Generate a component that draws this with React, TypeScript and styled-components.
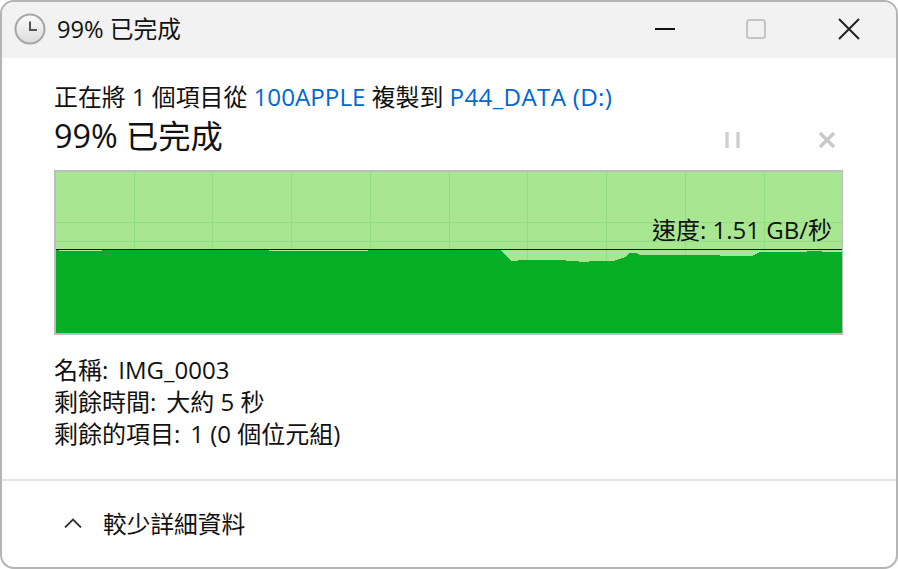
import styled, { createGlobalStyle } from "styled-components";

const GlobalStyle = createGlobalStyle`
  html, body {
    margin: 0;
    padding: 0;
    background: #fff;
  }
  body {
    font-family: "Open Sans", "Noto Sans CJK TC", sans-serif;
  }
`;

const Window = styled.div`
  box-sizing: border-box;
  width: 898px;
  height: 569px;
  border: 2px solid #b4b4b4;
  border-radius: 14px;
  background: #fff;
  overflow: hidden;
  display: flex;
  flex-direction: column;
`;
const TitleBar = styled.div`
  box-sizing: border-box;
  height: 56px;
  flex: none;
  background: #f2f2f2;
  display: flex;
  align-items: center;
  padding: 0 0 2px 12px;
  color: #111;
`;
const TitleText = styled.div`
  margin-left: 11px;
  padding-bottom: 2px;
  font-size: 23.7px;
  flex: 1;
`;
const WinButton = styled.button<{ $w: number }>`
  width: ${(p) => p.$w}px;
  height: 54px;
  border: 0;
  background: transparent;
  padding: 0;
  display: flex;
  align-items: center;
  justify-content: center;
`;
const Content = styled.div`
  flex: 1;
  padding: 21px 54px 0 52px;
  display: flex;
  flex-direction: column;
`;
const CopyLine = styled.div`
  font-size: 23.9px;
  line-height: 36px;
  color: #111;
  white-space: nowrap;
`;
const Link = styled.span<{ $spacing?: number }>`
  color: #0068d0;
  font-size: 24.2px;
  letter-spacing: ${(p) => p.$spacing ?? 0}px;
`;
const HeadRow = styled.div`
  display: flex;
  align-items: center;
  height: 42px;
`;
const Heading = styled.div`
  flex: 1;
  padding-bottom: 4px;
  font-size: 32.3px;
  color: #111;
`;
const Controls = styled.div`
  display: flex;
  align-items: center;
  gap: 79px;
  padding: 8px 7px 0 0;
`;
const Chart = styled.div`
  position: relative;
  margin-top: 13px;
  box-sizing: border-box;
  width: 789px;
  height: 165px;
  border: 2px solid #bcbcbc;
  border-right-width: 1px;
  background: #a9e691;
  svg {
    display: block;
  }
`;
const Speed = styled.div`
  position: absolute;
  right: 10px;
  top: 42px;
  font-size: 24px;
  line-height: 32px;
  color: #111;
  white-space: nowrap;
`;
const Details = styled.div`
  margin-top: 19px;
  font-size: 24px;
  line-height: 32px;
  color: #111;
`;
const DetailRow = styled.div`
  display: flex;
  gap: 10px;
`;
const Footer = styled.div`
  margin-top: auto;
  box-sizing: border-box;
  height: 88px;
  flex: none;
  border-top: 2px solid #e3e3e3;
  display: flex;
  align-items: center;
  padding: 0 0 3px 62px;
  gap: 21px;
  font-size: 23.7px;
  color: #111;
`;

const gridX = [78, 156, 235, 314, 393, 471, 550, 629, 708];
const gridY = [50, 69];
const fillTop =
  "0,78 3,78 3,79 46,79 46,78 213,78 213,79 312,79 312,78 444,78 456,89 468,88 504,88 529,90 537,89 557,89 569,85 574,81 580,81 584,83 624,83 664,83 664,84 696,84 704,80 751,80 751,79 766,79 766,80 786,80";

function App() {
  return (
    <Window>
      <GlobalStyle />
      <TitleBar>
        <svg width="32" height="32" viewBox="0 0 32 32">
          <defs>
            <linearGradient id="face" x1="0" y1="0" x2="0" y2="1">
              <stop offset="0" stopColor="#fbfbfb" />
              <stop offset="1" stopColor="#dcdcdc" />
            </linearGradient>
          </defs>
          <circle cx="16" cy="16" r="14.5" fill="url(#face)" stroke="#a5a5a5" strokeWidth="2" />
          <path d="M16 8.5V17H23" fill="none" stroke="#555" strokeWidth="2" />
        </svg>
        <TitleText>99% 已完成</TitleText>
        <WinButton $w={91}>
          <svg width="20" height="20" viewBox="0 0 20 20">
            <path d="M0 10H20" stroke="#111" strokeWidth="2" />
          </svg>
        </WinButton>
        <WinButton $w={91}>
          <svg width="20" height="20" viewBox="0 0 20 20">
            <rect x="1" y="1" width="18" height="18" rx="2.5" fill="none" stroke="#c4c4c4" strokeWidth="2" />
          </svg>
        </WinButton>
        <WinButton $w={95}>
          <svg width="22" height="22" viewBox="0 0 22 22">
            <path d="M1 1L21 21M21 1L1 21" stroke="#222" strokeWidth="2" />
          </svg>
        </WinButton>
      </TitleBar>
      <Content>
        <CopyLine>
          正在將 1 個項目從 <Link>100APPLE</Link> 複製到 <Link $spacing={0.3}>P44_DATA (D:)</Link>
        </CopyLine>
        <HeadRow>
          <Heading>99% 已完成</Heading>
          <Controls>
            <svg width="15" height="16" viewBox="0 0 15 16">
              <path d="M2 0V16M13 0V16" stroke="#cfcfcf" strokeWidth="3.4" />
            </svg>
            <svg width="16" height="16" viewBox="0 0 16 16">
              <path d="M1 1L15 15M15 1L1 15" stroke="#c8c8c8" strokeWidth="3.4" />
            </svg>
          </Controls>
        </HeadRow>
        <Chart>
          <svg width="786" height="161" viewBox="0 0 786 161">
            {gridX.map((x) => (
              <path key={x} d={`M${x + 0.5} 0V161`} stroke="#91e07f" />
            ))}
            {gridY.map((y) => (
              <path key={y} d={`M0 ${y + 0.5}H786`} stroke="#91e07f" />
            ))}
            <polygon points={`${fillTop} 786,161 0,161`} fill="#05ae25" shapeRendering="crispEdges" />
            <path d="M3 78.5H46M213 78.5H312" stroke="#c5e29a" />
            <path d="M0 77.5H786" stroke="#111" />
          </svg>
          <Speed>速度: 1.51 GB/秒</Speed>
        </Chart>
        <Details>
          <DetailRow>
            <span>名稱:</span>
            <span>IMG_0003</span>
          </DetailRow>
          <DetailRow>
            <span>剩餘時間:</span>
            <span>大約 5 秒</span>
          </DetailRow>
          <DetailRow>
            <span>剩餘的項目:</span>
            <span>1 (0 個位元組)</span>
          </DetailRow>
        </Details>
      </Content>
      <Footer>
        <svg width="18" height="10" viewBox="0 0 18 10">
          <path d="M1 9.5L9 1.5L17 9.5" fill="none" stroke="#333" strokeWidth="1.8" />
        </svg>
        <span>較少詳細資料</span>
      </Footer>
    </Window>
  );
}

export default App;
